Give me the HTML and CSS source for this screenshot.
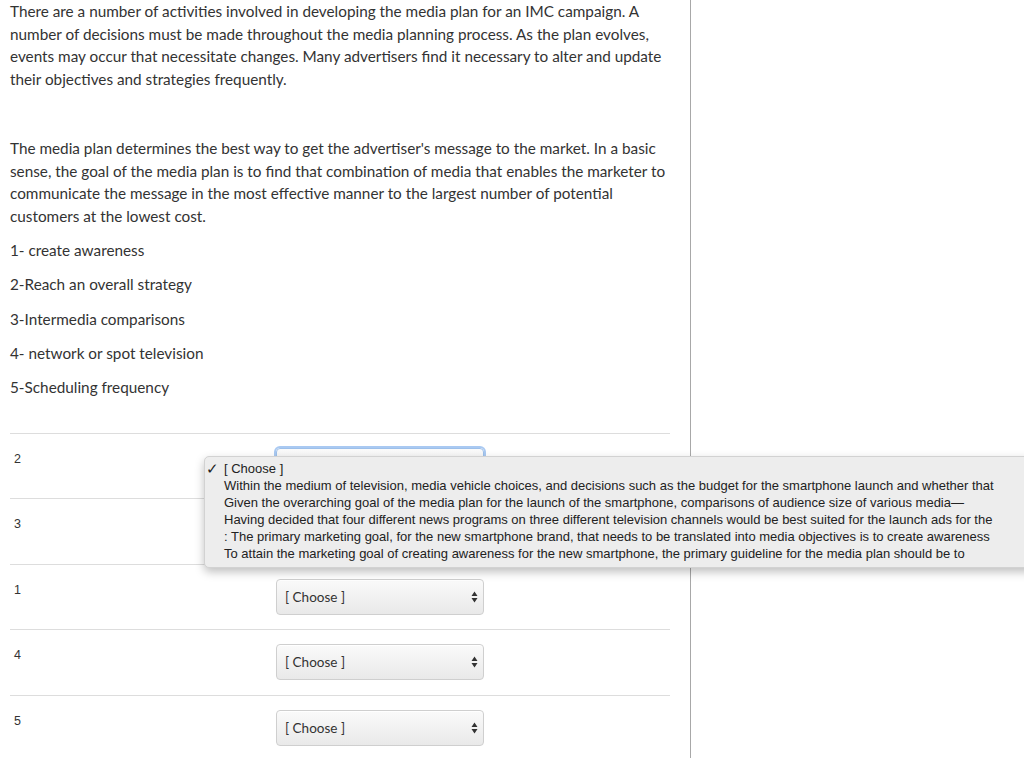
FILE: index.html
```html
<!DOCTYPE html>
<html lang="en">
<head>
    <meta charset="UTF-8">
    <title>Media Plan Question</title>
    <link rel="stylesheet" href="styles.css">
</head>
<body>
    <div class="page">
        <div class="question">
            <p>There are a number of activities involved in developing the media plan for an IMC campaign. A number of decisions must be made throughout the media planning process. As the plan evolves, events may occur that necessitate changes. Many advertisers find it necessary to alter and update their objectives and strategies frequently.</p>
            <p class="spaced">The media plan determines the best way to get the advertiser's message to the market. In a basic sense, the goal of the media plan is to find that combination of media that enables the marketer to communicate the message in the most effective manner to the largest number of potential customers at the lowest cost.</p>
            <p>1- create awareness</p>
            <p>2-Reach an overall strategy</p>
            <p>3-Intermedia comparisons</p>
            <p>4- network or spot television</p>
            <p>5-Scheduling frequency</p>

            <div class="answers">
                <!-- first two selects sit under the open menu -->
                <div class="answer-row">
                    <span class="answer-label">2</span>
                    <div class="select focused"></div>
                </div>
                <div class="answer-row">
                    <span class="answer-label">3</span>
                    <div class="select"></div>
                </div>
                <div class="answer-row">
                    <span class="answer-label">1</span>
                    <div class="select"><span>[ Choose ]</span><svg class="arrows" width="7" height="12" viewBox="0 0 7 12"><path d="M3.5 0.5 L6.5 5 L0.5 5 Z M0.5 7 L6.5 7 L3.5 11.5 Z" fill="#333"/></svg></div>
                </div>
                <div class="answer-row">
                    <span class="answer-label">4</span>
                    <div class="select"><span>[ Choose ]</span><svg class="arrows" width="7" height="12" viewBox="0 0 7 12"><path d="M3.5 0.5 L6.5 5 L0.5 5 Z M0.5 7 L6.5 7 L3.5 11.5 Z" fill="#333"/></svg></div>
                </div>
                <div class="answer-row">
                    <span class="answer-label">5</span>
                    <div class="select"><span>[ Choose ]</span><svg class="arrows" width="7" height="12" viewBox="0 0 7 12"><path d="M3.5 0.5 L6.5 5 L0.5 5 Z M0.5 7 L6.5 7 L3.5 11.5 Z" fill="#333"/></svg></div>
                </div>
            </div>
        </div>
        <div class="side"></div>
    </div>

    <ul class="dropdown-menu">
        <li class="checked"><span class="check">&#10003;</span>[ Choose ]</li>
        <li>Within the medium of television, media vehicle choices, and decisions such as the budget for the smartphone launch and whether that</li>
        <li>Given the overarching goal of the media plan for the launch of the smartphone, comparisons of audience size of various media&#8212;</li>
        <li>Having decided that four different news programs on three different television channels would be best suited for the launch ads for the</li>
        <li>: The primary marketing goal, for the new smartphone brand, that needs to be translated into media objectives is to create awareness</li>
        <li>To attain the marketing goal of creating awareness for the new smartphone, the primary guideline for the media plan should be to</li>
    </ul>
</body>
</html>
```

FILE: styles.css
```css
body {
    margin: 0;
    font-family: Lato, "Open Sans", sans-serif;
    color: #333;
    background-color: #fff;
}
.page {
    display: flex;
    height: 758px;
    overflow: hidden;
}
.question {
    width: 660px;
    padding: 0 20px 0 10px;
    border-right: 1px solid #a8a8a8;
    flex-shrink: 0;
}
.question p {
    font-size: 15.3px;
    line-height: 22.7px;
    margin: 0 0 11.55px 0;
    color: #333;
}
.question p.spaced {
    margin-top: 46px;
}
.answers {
    margin-top: 34px;
}
.answer-row {
    display: flex;
    height: 65.5px;
    border-top: 1px solid #ddd;
    box-sizing: border-box;
}
.answer-label {
    width: 266px;
    padding: 18px 0 0 4px;
    box-sizing: border-box;
    font-family: "Liberation Sans", Arial, sans-serif;
    font-size: 12.5px;
    color: #333;
}
.select {
    margin-top: 14px;
    width: 208px;
    height: 36px;
    box-sizing: border-box;
    border: 1px solid #cfcfcf;
    border-radius: 4px;
    background: linear-gradient(#fafafa, #e9e9e9);
    box-shadow: inset 0 1px 0 #fff;
    display: flex;
    align-items: center;
    justify-content: space-between;
    padding: 0 5px 0 8px;
    font-size: 13.5px;
    color: #333;
}
.select.focused {
    border-color: #9dc0ea;
    box-shadow: 0 0 0 2px #a9c9f2;
}
.arrows {
    display: block;
}
.side {
    flex: 1;
}
.dropdown-menu {
    position: absolute;
    left: 204px;
    top: 456px;
    width: 860px;
    margin: 0;
    padding: 3px 0 5px 0;
    list-style: none;
    background-color: #ededed;
    border: 1px solid #d2d2d2;
    border-radius: 5px;
    box-shadow: 0 4px 10px rgba(0, 0, 0, 0.25);
    font-family: "Liberation Sans", Arial, sans-serif;
    font-size: 13px;
    line-height: 17px;
    color: #222;
}
.dropdown-menu li {
    padding-left: 19px;
    white-space: nowrap;
    position: relative;
}
.check {
    position: absolute;
    left: 1px;
    font-size: 15px;
}
```
